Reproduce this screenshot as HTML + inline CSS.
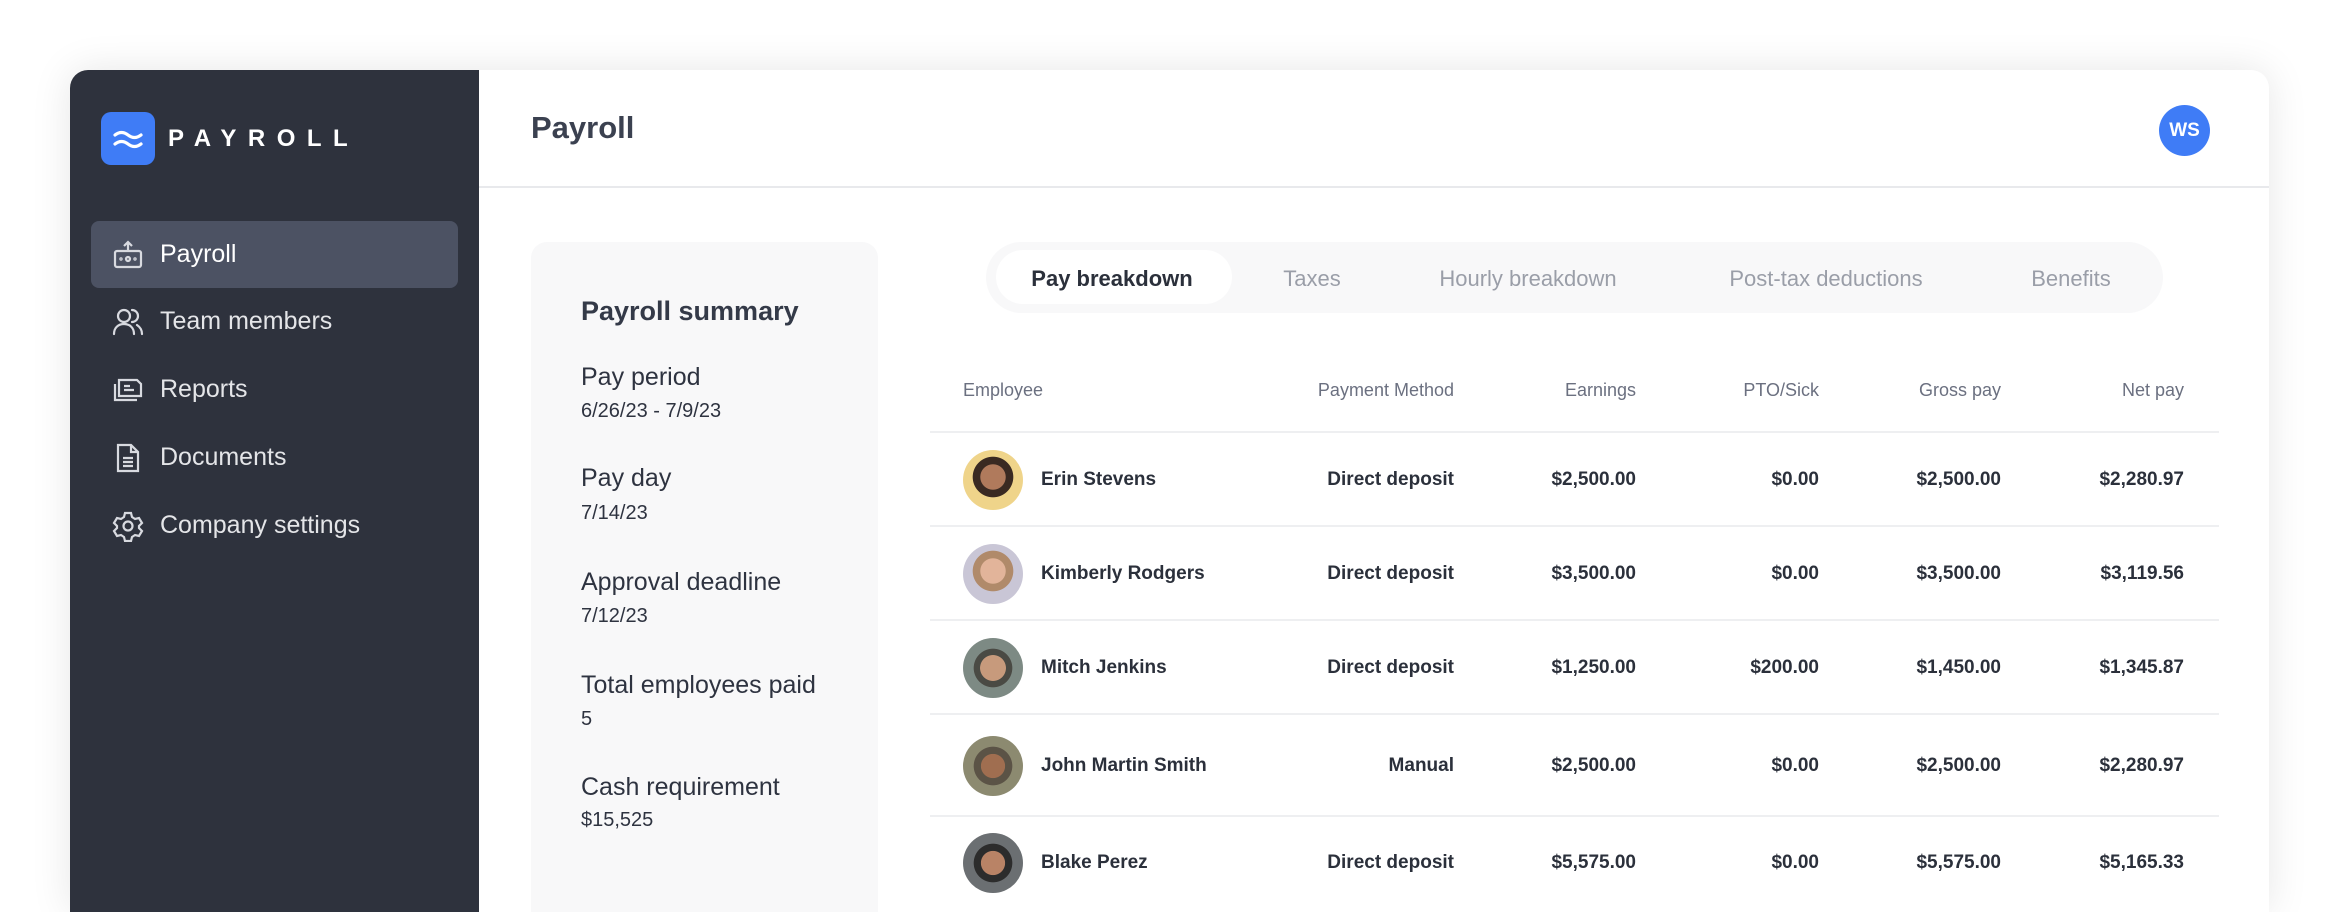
<!DOCTYPE html>
<html><head><meta charset="utf-8"><style>
*{margin:0;padding:0;box-sizing:border-box}
body{width:2338px;height:912px;background:#fff;font-family:"Liberation Sans",sans-serif;position:relative;overflow:hidden}
.card{position:absolute;left:70px;top:70px;width:2199px;height:842px;border-radius:18px 18px 0 0;background:#fff;box-shadow:0 0 40px rgba(0,0,0,.10);overflow:hidden}
.side{position:absolute;left:0;top:0;width:409px;height:100%;background:#2e323d}
.abs{position:absolute}
.logo{left:31px;top:42px;width:54px;height:53px;border-radius:10px;background:#3f7cf6}
.brand{left:98px;top:52px;color:#fff;font-weight:bold;font-size:24px;letter-spacing:11.5px;line-height:34px}
.nav{left:21px;width:367px;height:67px;border-radius:8px;display:flex;align-items:center;color:#e4e5e8;font-size:25px}
.nav svg{margin-left:21px;margin-right:16px}
.act{background:#4c5263;color:#fff}
.main{position:absolute;left:409px;top:0;right:0;height:100%}
.hdr{height:118px;border-bottom:2px solid #e8e9ec;position:relative}
.title{left:52px;top:40px;font-size:31px;font-weight:bold;color:#3b4150}
.ws{left:1680px;top:35px;width:51px;height:51px;border-radius:50%;background:#3f7cf6;color:#fff;font-weight:bold;font-size:19px;display:flex;align-items:center;justify-content:center}
.sum{left:52px;top:172px;width:347px;height:670px;background:#f8f8f9;border-radius:16px 16px 0 0}
.sum .h{position:absolute;left:50px;font-size:27px;font-weight:bold;color:#343a48}
.sum .l{position:absolute;left:50px;font-size:25px;color:#2e3340}
.sum .v{position:absolute;left:50px;font-size:20px;color:#2e3340}
.tabs{left:507px;top:172px;width:1177px;height:71px;background:#f8f8f9;border-radius:36px}
.pill{left:10px;top:8px;width:236px;height:54px;background:#fff;border-radius:27px}
.tab{top:179px;font-size:22px;color:#9a9ea8;line-height:60px;transform:translateX(-50%);white-space:nowrap}
.th{font-size:18px;color:#6b7080;white-space:nowrap}
.td{font-size:19px;color:#2b303b;font-weight:bold;white-space:nowrap}
.r{text-align:right}
.line{left:451px;width:1289px;height:2px;background:#eeeff1}
.av{left:484px;width:60px;height:60px;border-radius:50%}
</style></head><body>
<div class="card">
 <div class="side">
  <div class="abs logo"><svg width="54" height="53" viewBox="0 0 54 53"><path d="M14 23q6.5-5 13 0t13 0M14 32q6.5-5 13 0t13 0" stroke="#fff" stroke-width="3.2" fill="none" stroke-linecap="round"/></svg></div>
  <div class="abs brand">PAYROLL</div>
  <div class="abs nav act" style="top:151px"><svg width="32" height="32" viewBox="0 0 32 32" fill="none" stroke="#d8dae0" stroke-width="2.2"><rect x="3" y="12" width="26" height="16" rx="2"/><path d="M16 3v10M12 7l4-4 4 4"/><circle cx="16" cy="20" r="2"/><circle cx="9" cy="20" r=".6"/><circle cx="23" cy="20" r=".6"/></svg>Payroll</div>
  <div class="abs nav" style="top:218px"><svg width="32" height="32" viewBox="0 0 32 32" fill="none" stroke="#d8dae0" stroke-width="2.2" stroke-linecap="round"><circle cx="12" cy="10" r="6"/><path d="M2 28c0-6 4-10 10-10s10 4 10 10M20 4a6 6 0 010 12M25 19c3 2 5 5 5 9"/></svg>Team members</div>
  <div class="abs nav" style="top:286px"><svg width="32" height="32" viewBox="0 0 32 32" fill="none" stroke="#d8dae0" stroke-width="2.2"><path d="M3 10v16h22"/><path d="M7 6v16h22V10l-4-4z"/><path d="M12 12h6M12 16h10"/></svg>Reports</div>
  <div class="abs nav" style="top:354px"><svg width="32" height="32" viewBox="0 0 32 32" fill="none" stroke="#d8dae0" stroke-width="2.2"><path d="M6 3h13l7 7v19H6z"/><path d="M19 3v7h7M11 16h10M11 20h10M11 24h10"/></svg>Documents</div>
  <div class="abs nav" style="top:422px"><svg width="32" height="32" viewBox="0 0 32 32" fill="none" stroke="#d8dae0" stroke-width="2.2"><path d="M13 3h6l1 4 3 2 4-1 3 5-3 3v2l3 3-3 5-4-1-3 2-1 4h-6l-1-4-3-2-4 1-3-5 3-3v-2l-3-3 3-5 4 1 3-2z"/><circle cx="16" cy="16" r="4.5"/></svg>Company settings</div>
 </div>
 <div class="main">
  <div class="hdr"><div class="abs title">Payroll</div><div class="abs ws">WS</div></div>
  <div class="abs sum">
   <div class="h" style="top:54px">Payroll summary</div>
   <div class="l" style="top:121px">Pay period</div><div class="v" style="top:158px">6/26/23 - 7/9/23</div>
   <div class="l" style="top:222px">Pay day</div><div class="v" style="top:260px">7/14/23</div>
   <div class="l" style="top:326px">Approval deadline</div><div class="v" style="top:363px">7/12/23</div>
   <div class="l" style="top:429px">Total employees paid</div><div class="v" style="top:466px">5</div>
   <div class="l" style="top:531px">Cash requirement</div><div class="v" style="top:567px">$15,525</div>
  </div>
  <div class="abs tabs"><div class="abs pill"></div></div>
  <div class="abs tab" style="left:633px;color:#2b303b;font-weight:bold">Pay breakdown</div>
  <div class="abs tab" style="left:833px">Taxes</div>
  <div class="abs tab" style="left:1049px">Hourly breakdown</div>
  <div class="abs tab" style="left:1347px">Post-tax deductions</div>
  <div class="abs tab" style="left:1592px">Benefits</div>

  <div class="abs th" style="left:484px;top:310px">Employee</div>
  <div class="abs th r" style="right:815px;top:310px">Payment Method</div>
  <div class="abs th r" style="right:633px;top:310px">Earnings</div>
  <div class="abs th r" style="right:450px;top:310px">PTO/Sick</div>
  <div class="abs th r" style="right:268px;top:310px">Gross pay</div>
  <div class="abs th r" style="right:85px;top:310px">Net pay</div>
  <div class="abs line" style="top:361px"></div>
  <div class="abs line" style="top:455px"></div>
  <div class="abs line" style="top:549px"></div>
  <div class="abs line" style="top:643px"></div>
  <div class="abs line" style="top:745px"></div>

  <div class="abs av" style="top:380px;background:radial-gradient(circle at 50% 45%,#b07a5c 0 28%,#3a2a22 29% 45%,#efd48a 46%)"></div>
  <div class="abs av" style="top:474px;background:radial-gradient(circle at 50% 45%,#e2b49a 0 28%,#b08a6a 29% 45%,#c9c6d6 46%)"></div>
  <div class="abs av" style="top:568px;background:radial-gradient(circle at 50% 50%,#c79a7c 0 30%,#4a4a44 31% 45%,#7d8a84 46%)"></div>
  <div class="abs av" style="top:666px;background:radial-gradient(circle at 50% 50%,#a06e50 0 28%,#5b5346 29% 45%,#8c8a70 46%)"></div>
  <div class="abs av" style="top:763px;background:radial-gradient(circle at 50% 50%,#b98366 0 28%,#2c2c2c 29% 45%,#6b6f72 46%)"></div>

  <div class="abs td" style="left:562px;top:469px;top:399px">Erin Stevens</div>
  <div class="abs td" style="left:562px;top:493px">Kimberly Rodgers</div>
  <div class="abs td" style="left:562px;top:587px">Mitch Jenkins</div>
  <div class="abs td" style="left:562px;top:685px">John Martin Smith</div>
  <div class="abs td" style="left:562px;top:782px">Blake Perez</div>

  <div class="abs td r" style="right:815px;top:399px">Direct deposit</div>
  <div class="abs td r" style="right:815px;top:493px">Direct deposit</div>
  <div class="abs td r" style="right:815px;top:587px">Direct deposit</div>
  <div class="abs td r" style="right:815px;top:685px">Manual</div>
  <div class="abs td r" style="right:815px;top:782px">Direct deposit</div>

  <div class="abs td r" style="right:633px;top:399px">$2,500.00</div>
  <div class="abs td r" style="right:633px;top:493px">$3,500.00</div>
  <div class="abs td r" style="right:633px;top:587px">$1,250.00</div>
  <div class="abs td r" style="right:633px;top:685px">$2,500.00</div>
  <div class="abs td r" style="right:633px;top:782px">$5,575.00</div>

  <div class="abs td r" style="right:450px;top:399px">$0.00</div>
  <div class="abs td r" style="right:450px;top:493px">$0.00</div>
  <div class="abs td r" style="right:450px;top:587px">$200.00</div>
  <div class="abs td r" style="right:450px;top:685px">$0.00</div>
  <div class="abs td r" style="right:450px;top:782px">$0.00</div>

  <div class="abs td r" style="right:268px;top:399px">$2,500.00</div>
  <div class="abs td r" style="right:268px;top:493px">$3,500.00</div>
  <div class="abs td r" style="right:268px;top:587px">$1,450.00</div>
  <div class="abs td r" style="right:268px;top:685px">$2,500.00</div>
  <div class="abs td r" style="right:268px;top:782px">$5,575.00</div>

  <div class="abs td r" style="right:85px;top:399px">$2,280.97</div>
  <div class="abs td r" style="right:85px;top:493px">$3,119.56</div>
  <div class="abs td r" style="right:85px;top:587px">$1,345.87</div>
  <div class="abs td r" style="right:85px;top:685px">$2,280.97</div>
  <div class="abs td r" style="right:85px;top:782px">$5,165.33</div>
 </div>
</div>
</body></html>
